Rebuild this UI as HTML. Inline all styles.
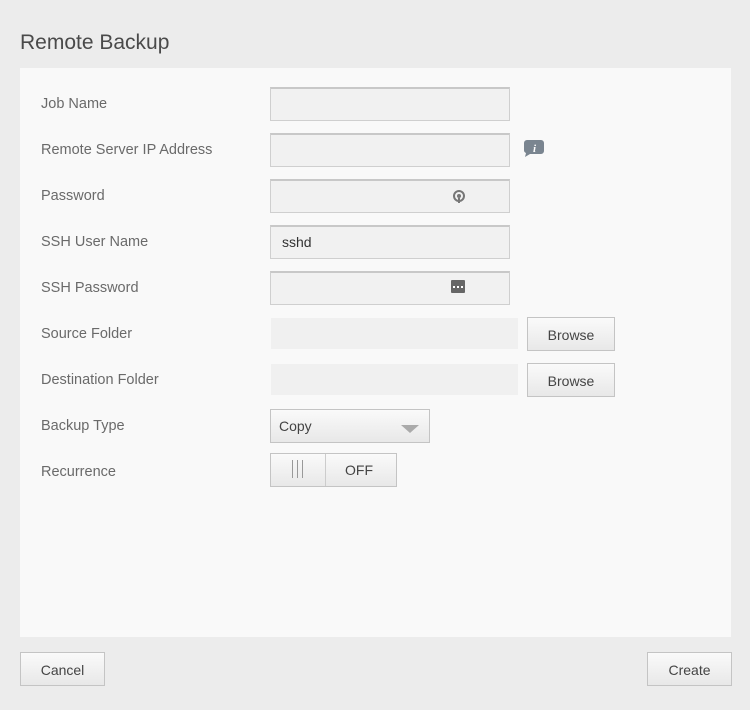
<!DOCTYPE html>
<html><head><style>
body{margin:0;width:750px;height:710px;background:#ececec;font-family:"Liberation Sans",sans-serif;position:relative;overflow:hidden}
.t{position:absolute;left:20px;top:31px;font-size:21px;color:#4a4a4a}
.panel{position:absolute;left:20px;top:68px;width:711px;height:569px;background:#f9f9f9}
.l{position:absolute;left:41px;font-size:14.5px;color:#6a6a6a}
.in{position:absolute;left:270px;width:238px;height:31px;background:#f1f1f1;border:1px solid #cfcfcf;border-top:2px solid #c8c8c8;box-sizing:border-box;font-size:14px;color:#333;padding:7px 11px}
.ro{position:absolute;left:271px;width:247px;height:31px;background:#f0f0f0}
.btn{position:absolute;background:linear-gradient(#fafafa,#e8e8e8);border:1px solid #c4c4c4;box-sizing:border-box;font-size:14px;color:#444;text-align:center}
.v{position:absolute;top:460px;width:1px;height:18px;background:#999}
</style></head><body>
<div class="t">Remote Backup</div>
<div class="panel"></div>
<div class="l" style="top:96px">Job Name</div>
<div class="l" style="top:142px">Remote Server IP Address</div>
<div class="l" style="top:188px">Password</div>
<div class="l" style="top:234px">SSH User Name</div>
<div class="l" style="top:280px">SSH Password</div>
<div class="l" style="top:326px">Source Folder</div>
<div class="l" style="top:372px">Destination Folder</div>
<div class="l" style="top:418px">Backup Type</div>
<div class="l" style="top:464px">Recurrence</div>
<div class="in" style="top:87px;width:240px;height:34px"></div>
<div class="in" style="top:133px;width:240px;height:34px"></div>
<svg style="position:absolute;left:523px;top:139px" width="22" height="19"><path d="M4 1h14a3 3 0 0 1 3 3v8a3 3 0 0 1-3 3H7l-5 3 1-4a3 3 0 0 1-2-3V4a3 3 0 0 1 3-3z" fill="#7a8590"/><text x="10" y="13" font-size="11" font-style="italic" font-weight="bold" fill="#fff" font-family="Liberation Serif">i</text></svg>
<div class="in" style="top:179px;width:240px;height:34px"></div>
<svg style="position:absolute;left:452px;top:189px" width="14" height="15"><circle cx="7" cy="7" r="5" fill="none" stroke="#777" stroke-width="2"/><circle cx="7" cy="7" r="2" fill="#777"/><path d="M7 9v5" stroke="#777" stroke-width="2"/></svg>
<div class="in" style="top:225px;width:240px;height:34px">sshd</div>
<div class="in" style="top:271px;width:240px;height:34px"></div>
<div style="position:absolute;left:451px;top:280px;width:14px;height:13px;background:#666;border-radius:1px"><div style="margin:6px 2px;height:2px;border-top:2px dotted #fff"></div></div>
<div class="ro" style="top:318px"></div>
<div class="ro" style="top:364px"></div>
<div class="btn" style="left:527px;top:317px;width:88px;height:34px;padding-top:9px">Browse</div>
<div class="btn" style="left:527px;top:363px;width:88px;height:34px;padding-top:9px">Browse</div>
<div class="btn" style="left:270px;top:409px;width:160px;height:34px;text-align:left;padding:8px 8px">Copy</div>
<div style="position:absolute;left:401px;top:425px;border-left:9px solid transparent;border-right:9px solid transparent;border-top:8px solid #aaa"></div>
<div class="btn" style="left:270px;top:453px;width:127px;height:34px"></div>
<div style="position:absolute;left:325px;top:454px;width:1px;height:32px;background:#ccc"></div>
<div class="v" style="left:292px"></div>
<div class="v" style="left:297px"></div>
<div class="v" style="left:302px"></div>
<div style="position:absolute;left:345px;top:462px;font-size:14px;color:#444">OFF</div>
<div class="btn" style="left:20px;top:652px;width:85px;height:34px;padding-top:9px">Cancel</div>
<div class="btn" style="left:647px;top:652px;width:85px;height:34px;padding-top:9px">Create</div>
</body></html>
